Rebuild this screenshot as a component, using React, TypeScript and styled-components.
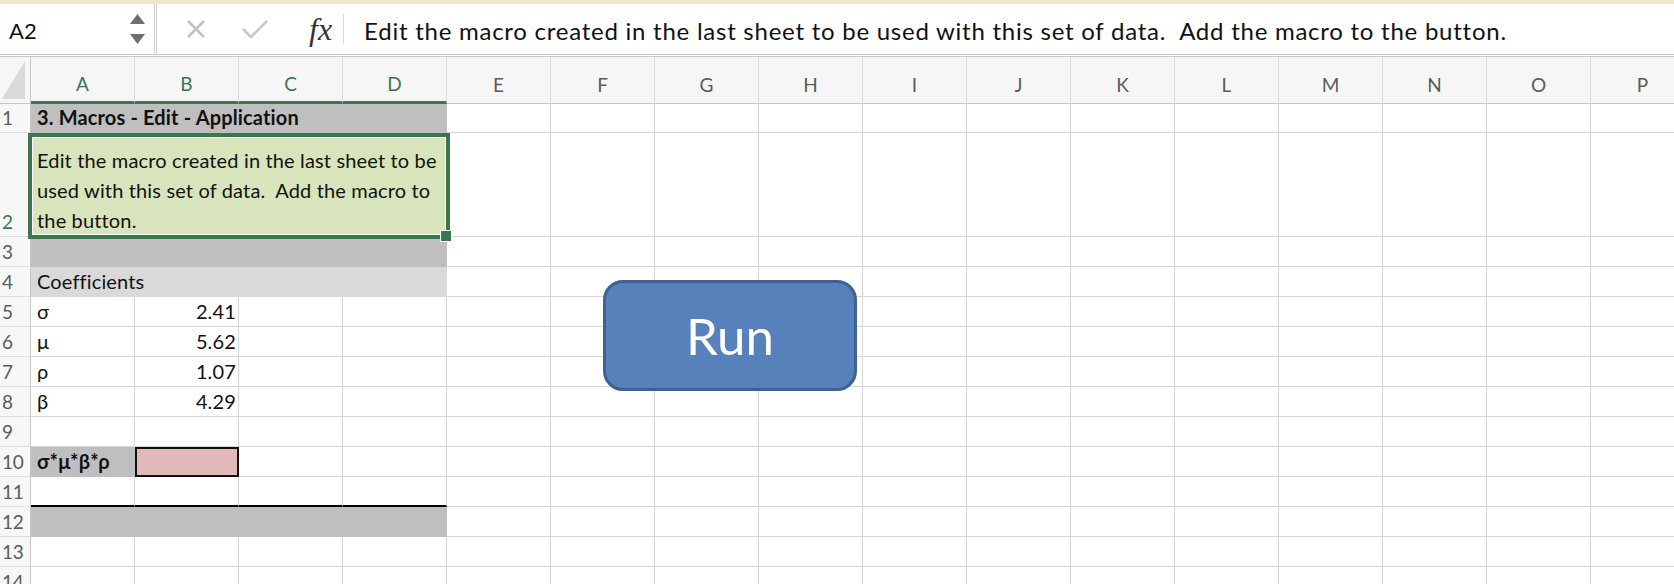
import React from "react";
import styled, { createGlobalStyle } from "styled-components";

const GREEN = "#3a7650";
const GRID = "#d6d6d6";
const GRAY_FILL = "#bfbfbf";
const LIGHT_FILL = "#d9d9d9";
const NOTE_FILL = "#d8e4bc";
const PINK_FILL = "#e0b9b8";

const COLS = ["A", "B", "C", "D", "E", "F", "G", "H", "I", "J", "K", "L", "M", "N", "O", "P"];

const GlobalStyle = createGlobalStyle`
  html, body {
    margin: 0;
    padding: 0;
    background: #fff;
  }
  body {
    font-family: Lato, "Open Sans", sans-serif;
  }
`;

const Window = styled.div`
  width: 1674px;
  height: 584px;
  overflow: hidden;
  display: flex;
  flex-direction: column;
  background: #fff;
`;

const TopStrip = styled.div`
  flex: none;
  height: 4px;
  background: #efe4d0;
`;

const FormulaBar = styled.div`
  flex: none;
  display: flex;
  align-items: stretch;
  height: 53px;
  box-sizing: border-box;
  border-bottom: 3px double #c8c8c8;
`;

const NameBox = styled.div`
  width: 157px;
  box-sizing: border-box;
  display: flex;
  align-items: center;
  justify-content: space-between;
  padding: 2px 9px 0 9px;
  border-right: 3px double #d2d2d2;
  font-size: 22px;
  color: #111;
`;

const Stepper = styled.div`
  display: flex;
  flex-direction: column;
  gap: 10px;
  margin-top: -2px;
`;

const Arrow = styled.div<{ $down?: boolean }>`
  width: 15px;
  height: 10px;
  background: #6e6e6e;
  clip-path: ${(p) =>
    p.$down ? "polygon(0 0, 100% 0, 50% 100%)" : "polygon(50% 0, 100% 100%, 0 100%)"};
`;

const Tools = styled.div`
  display: flex;
  align-items: center;
  padding-left: 28px;
  gap: 34px;
`;

const Fx = styled.span`
  font-family: "Liberation Serif", "DejaVu Serif", serif;
  font-style: italic;
  font-size: 32px;
  color: #333;
  margin-left: 6px;
`;

const Divider = styled.div`
  width: 1px;
  height: 30px;
  align-self: center;
  background: #dadada;
  margin: 0 20px 0 11px;
`;

const FormulaText = styled.div`
  display: flex;
  align-items: center;
  padding-top: 3px;
  font-size: 24px;
  letter-spacing: 0.75px;
  color: #111;
  white-space: pre;
`;

const Sheet = styled.div`
  position: relative;
  flex: none;
  display: grid;
  grid-template-columns: 31px repeat(16, 104px);
  grid-template-rows: 47px 29px 104px repeat(12, 30px);
`;

const Corner = styled.div`
  position: relative;
  box-sizing: border-box;
  background: #f6f6f6;
  border-right: 1px solid #c6c6c6;
  border-bottom: 1px solid #c6c6c6;

  &::after {
    content: "";
    position: absolute;
    right: 5px;
    bottom: 4px;
    width: 23px;
    height: 38px;
    background: #d9d9d9;
    clip-path: polygon(100% 0, 100% 100%, 0 100%);
  }
`;

const ColHead = styled.div<{ $sel?: boolean }>`
  box-sizing: border-box;
  display: flex;
  align-items: center;
  justify-content: center;
  padding-top: 8px;
  background: #f6f6f6;
  border-right: 1px solid #dcdcdc;
  border-bottom: ${(p) => (p.$sel ? `3px solid ${GREEN}` : "1px solid #c6c6c6")};
  color: ${(p) => (p.$sel ? GREEN : "#5b5b5b")};
  font-size: 19px;
`;

const RowHead = styled.div<{ $sel?: boolean }>`
  box-sizing: border-box;
  display: flex;
  align-items: flex-end;
  justify-content: flex-start;
  padding-left: 2px;
  line-height: 28px;
  background: #f7f7f7;
  border-right: 1px solid #c6c6c6;
  border-bottom: 1px solid #dedede;
  color: ${(p) => (p.$sel ? GREEN : "#5b5b5b")};
  font-size: 19px;
  letter-spacing: -0.3px;
`;

const Cell = styled.div<{
  $span?: number;
  $fill?: string;
  $right?: boolean;
  $bold?: boolean;
  $rule?: boolean;
  $boxed?: boolean;
  $wrap?: boolean;
}>`
  grid-column: span ${(p) => p.$span ?? 1};
  box-sizing: border-box;
  display: flex;
  align-items: flex-end;
  justify-content: ${(p) => (p.$right ? "flex-end" : "flex-start")};
  padding: 0 2px 1px 6px;
  line-height: ${(p) => (p.$wrap ? "30px" : "28px")};
  background: ${(p) => p.$fill ?? "#fff"};
  border-right: 1px solid ${(p) => p.$fill ?? GRID};
  border-bottom: ${(p) => (p.$rule ? "2px solid #000" : `1px solid ${p.$fill ?? GRID}`)};
  ${(p) => (p.$boxed ? "border: 2px solid #111;" : "")}
  font-size: 20px;
  letter-spacing: 0.15px;
  font-weight: ${(p) => (p.$bold ? 700 : 400)};
  color: #111;
  white-space: ${(p) => (p.$wrap ? "normal" : "nowrap")};
`;

const Selection = styled.div`
  position: absolute;
  left: 28px;
  top: 76px;
  width: 422px;
  height: 106px;
  box-sizing: border-box;
  border: 4px solid ${GREEN};
  box-shadow: inset 0 0 0 1px #fff;
  pointer-events: none;
`;

const Handle = styled.div`
  position: absolute;
  left: 440px;
  top: 173px;
  width: 12px;
  height: 12px;
  box-sizing: border-box;
  background: ${GREEN};
  border: 1px solid #fff;
`;

const RunButton = styled.div`
  position: absolute;
  left: 603px;
  top: 223px;
  width: 254px;
  height: 111px;
  box-sizing: border-box;
  display: flex;
  align-items: center;
  justify-content: center;
  border: 3px solid #3f6290;
  border-radius: 20px;
  background: #5681bb;
  color: #fff;
  font-size: 51px;
`;

function Blanks({ from = 4 }: { from?: number }) {
  return (
    <>
      {COLS.slice(from).map((c) => (
        <Cell key={c} />
      ))}
    </>
  );
}

function XIcon() {
  return (
    <svg width="22" height="22" viewBox="0 0 22 22">
      <path d="M3 3 L19 19 M19 3 L3 19" stroke="#c2c2c2" strokeWidth="2.6" fill="none" />
    </svg>
  );
}

function CheckIcon() {
  return (
    <svg width="28" height="22" viewBox="0 0 28 22">
      <path d="M2 11 L10 19 L26 3" stroke="#c8c8c8" strokeWidth="2.6" fill="none" />
    </svg>
  );
}

const coefficients = [
  { n: 5, sym: "σ", val: "2.41" },
  { n: 6, sym: "μ", val: "5.62" },
  { n: 7, sym: "ρ", val: "1.07" },
  { n: 8, sym: "β", val: "4.29" },
];

export default function App() {
  return (
    <Window>
      <GlobalStyle />
      <TopStrip />
      <FormulaBar>
        <NameBox>
          <span>A2</span>
          <Stepper>
            <Arrow />
            <Arrow $down />
          </Stepper>
        </NameBox>
        <Tools>
          <XIcon />
          <CheckIcon />
          <Fx>fx</Fx>
        </Tools>
        <Divider />
        <FormulaText>
          {"Edit the macro created in the last sheet to be used with this set of data.  Add the macro to the button."}
        </FormulaText>
      </FormulaBar>

      <Sheet>
        <Corner />
        {COLS.map((c, i) => (
          <ColHead key={c} $sel={i < 4}>
            {c}
          </ColHead>
        ))}

        <RowHead>1</RowHead>
        <Cell $span={4} $fill={GRAY_FILL} $bold>
          3. Macros - Edit - Application
        </Cell>
        <Blanks />

        <RowHead $sel>2</RowHead>
        <Cell $span={4} $fill={NOTE_FILL} $wrap>
          Edit the macro created in the last sheet to be used with this set of data.&nbsp; Add the macro to the button.
        </Cell>
        <Blanks />

        <RowHead>3</RowHead>
        <Cell $span={4} $fill={GRAY_FILL} />
        <Blanks />

        <RowHead>4</RowHead>
        <Cell $span={4} $fill={LIGHT_FILL}>
          Coefficients
        </Cell>
        <Blanks />

        {coefficients.map((r) => (
          <React.Fragment key={r.n}>
            <RowHead>{r.n}</RowHead>
            <Cell>{r.sym}</Cell>
            <Cell $right>{r.val}</Cell>
            <Blanks from={2} />
          </React.Fragment>
        ))}

        <RowHead>9</RowHead>
        <Blanks from={0} />

        <RowHead>10</RowHead>
        <Cell $fill={GRAY_FILL} $bold>
          σ*μ*β*ρ
        </Cell>
        <Cell $fill={PINK_FILL} $boxed />
        <Blanks from={2} />

        <RowHead>11</RowHead>
        <Cell $rule />
        <Cell $rule />
        <Cell $rule />
        <Cell $rule />
        <Blanks />

        <RowHead>12</RowHead>
        <Cell $span={4} $fill={GRAY_FILL} />
        <Blanks />

        <RowHead>13</RowHead>
        <Blanks from={0} />

        <RowHead>14</RowHead>
        <Blanks from={0} />

        <Selection />
        <Handle />
        <RunButton>Run</RunButton>
      </Sheet>
    </Window>
  );
}
